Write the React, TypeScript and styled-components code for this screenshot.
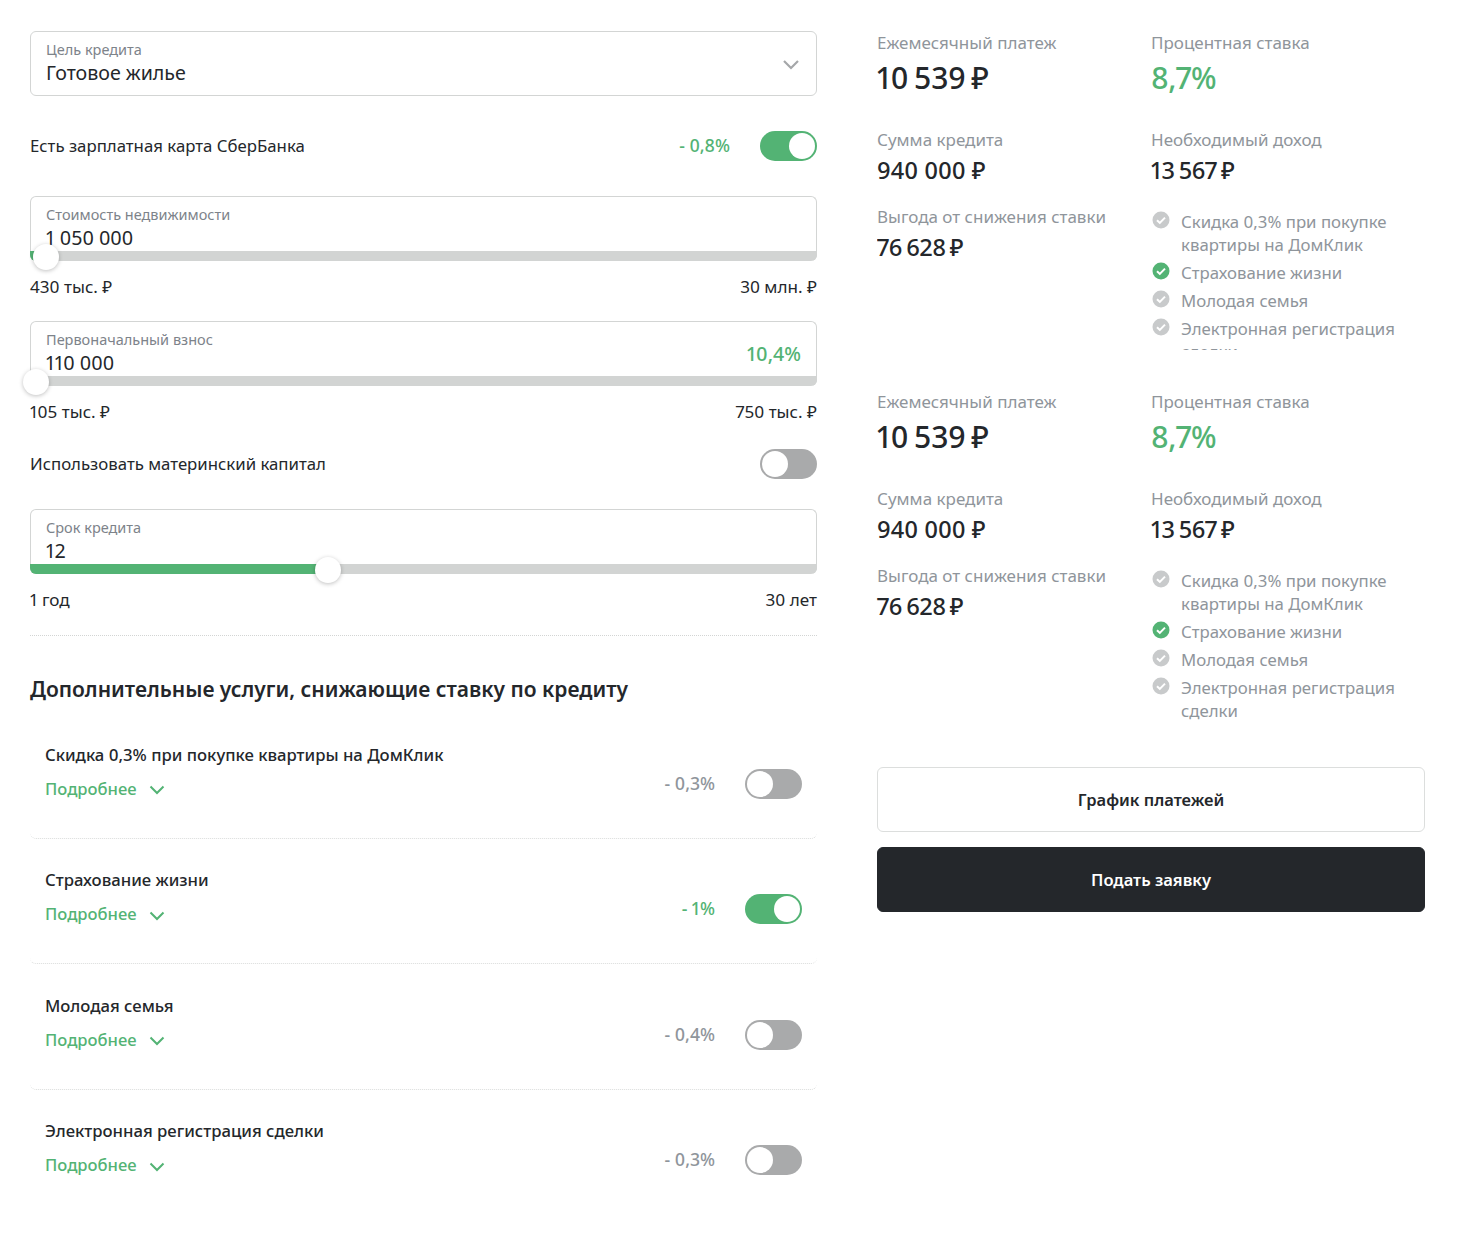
import React from "react";
import styled, { createGlobalStyle } from "styled-components";

const green = "#53b374";
const dark = "#24272b";

const Global = createGlobalStyle`
  html, body { margin: 0; padding: 0; background: #fff; }
  body {
    font-family: "Noto Sans", "Open Sans", "DejaVu Sans", sans-serif;
    font-variant-numeric: proportional-nums;
    color: ${dark};
  }
  * { box-sizing: border-box; }
`;

const Page = styled.div`
  width: 1457px;
  height: 1241px;
  padding: 31px 32px 0 30px;
  display: flex;
  gap: 60px;
  overflow: hidden;
`;
const Left = styled.div`
  width: 787px;
  flex: none;
  display: flex;
  flex-direction: column;
`;
const Right = styled.div`
  width: 548px;
  flex: none;
  display: flex;
  flex-direction: column;
`;
const Field = styled.div<{ $mb?: number }>`
  position: relative;
  height: 65px;
  border: 1px solid #d3d5d4;
  border-radius: 6px;
  padding: 8px 15px 0;
  display: flex;
  justify-content: space-between;
  margin-bottom: ${(p) => p.$mb ?? 0}px;
`;
const SliderField = styled(Field)`
  border-bottom: none;
`;
const FieldText = styled.div`
  display: flex;
  flex-direction: column;
`;
const FieldLabel = styled.div`
  font-size: 14.5px;
  line-height: 18px;
  margin-bottom: 1px;
  color: #7d838a;
`;
const FieldValue = styled.div`
  font-size: 19.6px;
  line-height: 28px;
`;
const Chevron = styled.svg`
  margin: 19px 1px 0 0;
  width: 18px;
  height: 12px;
  fill: none;
  stroke: #a5a7a9;
  stroke-width: 2.2;
`;
const Track = styled.div`
  position: absolute;
  left: -1px;
  right: -1px;
  bottom: 0;
  height: 10px;
  background: #d2d4d3;
  border-radius: 0 0 6px 6px;
  overflow: hidden;
`;
const Fill = styled.div<{ $w: number }>`
  height: 100%;
  width: ${(p) => p.$w}px;
  background: ${green};
`;
const Thumb = styled.div<{ $x: number }>`
  position: absolute;
  left: ${(p) => p.$x - 13}px;
  bottom: -9px;
  width: 26px;
  height: 26px;
  border-radius: 50%;
  background: #fff;
  box-shadow: 0 1px 4px rgba(0, 0, 0, 0.25);
`;
const Percent = styled.div`
  color: ${green};
  font-size: 19.6px;
  font-weight: 500;
  margin: 11px 0 0;
  line-height: 26px;
`;
const Limits = styled.div<{ $mb: number }>`
  display: flex;
  justify-content: space-between;
  font-size: 17.1px;
  line-height: 22px;
  margin-top: 15px;
  margin-bottom: ${(p) => p.$mb}px;
`;
const OptionRow = styled.div<{ $mt: number; $mb: number }>`
  height: 30px;
  display: flex;
  align-items: center;
  justify-content: space-between;
  margin-top: ${(p) => p.$mt}px;
  margin-bottom: ${(p) => p.$mb}px;
`;
const OptionText = styled.span`
  font-size: 16.8px;
  margin-bottom: 2px;
`;
const Side = styled.div`
  display: flex;
  align-items: center;
  gap: 30px;
`;
const Discount = styled.div<{ $on: boolean }>`
  font-size: 17.6px;
  font-weight: 500;
  margin-bottom: 2px;
  color: ${(p) => (p.$on ? green : "#8f959b")};
`;
const Toggle = styled.div<{ $on: boolean }>`
  width: 57px;
  height: 30px;
  border-radius: 15px;
  padding: 2px;
  background: ${(p) => (p.$on ? green : "#a9aaab")};
  display: flex;
  justify-content: ${(p) => (p.$on ? "flex-end" : "flex-start")};
`;
const Knob = styled.div`
  width: 26px;
  height: 26px;
  border-radius: 50%;
  background: #fff;
`;
const Dotted = styled.div`
  border-top: 1px dotted #d3d5d4;
`;
const Heading = styled.h2`
  font-size: 21px;
  font-weight: 600;
  line-height: 30px;
  margin: 38px 0 0;
`;
const Services = styled.div`
  margin-top: 9.8px;
  display: flex;
  flex-direction: column;
`;
const Service = styled.div<{ $last?: boolean }>`
  height: 125.5px;
  padding: 29.5px 15px 0;
  display: flex;
  justify-content: space-between;
  border-radius: 0 0 6px 6px;
  border-bottom: ${(p) => (p.$last ? "none" : "1px dotted #dadcdb")};
`;
const ServiceTitle = styled.div`
  font-size: 16.7px;
  font-weight: 500;
  line-height: 24px;
`;
const More = styled.div`
  margin-top: 10px;
  display: flex;
  align-items: center;
  gap: 12px;
  font-size: 16.6px;
  font-weight: 500;
  color: ${green};
  line-height: 24px;
`;
const MoreChevron = styled.svg`
  width: 16px;
  height: 10px;
  margin-top: 3px;
  fill: none;
  stroke: ${green};
  stroke-width: 2;
`;
const ServiceSide = styled(Side)`
  margin-top: 26px;
  align-self: flex-start;
`;
const Block = styled.div<{ $clip?: boolean }>`
  display: grid;
  grid-template-columns: 274px 274px;
  height: ${(p) => (p.$clip ? "319px" : "auto")};
  overflow: ${(p) => (p.$clip ? "hidden" : "visible")};
  margin-bottom: ${(p) => (p.$clip ? "40px" : "0")};
`;
const Column = styled.div`
  display: flex;
  flex-direction: column;
`;
const StatLabel = styled.div`
  font-size: 17px;
  line-height: 24px;
  color: #8f959b;
`;
const BigValue = styled.div<{ $green?: boolean }>`
  font-size: 30px;
  font-weight: 500;
  line-height: 40px;
  margin: 3px 0 30px;
  word-spacing: -2px;
  letter-spacing: ${(p) => (p.$green ? "-0.5px" : "-0.1px")};
  color: ${(p) => (p.$green ? green : dark)};
`;
const MidValue = styled.div<{ $tight?: boolean }>`
  font-size: 23.5px;
  font-weight: 500;
  line-height: 30px;
  margin: 3px 0 20px;
  word-spacing: ${(p) => (p.$tight ? "-1.5px" : "0")};
  letter-spacing: ${(p) => (p.$tight ? "-0.4px" : "0")};
`;
const Perks = styled.ul`
  list-style: none;
  margin: 5px 0 0;
  padding: 0;
  display: flex;
  flex-direction: column;
  gap: 5px;
`;
const Perk = styled.li`
  display: flex;
  gap: 11px;
  font-size: 16.8px;
  line-height: 23px;
  color: #8f959b;
`;
const PerkIcon = styled.svg`
  width: 18px;
  height: 18px;
  flex: none;
  margin: 1px 0 0 1px;
`;
const Buttons = styled.div`
  margin-top: 45px;
  display: flex;
  flex-direction: column;
  gap: 15px;
`;
const Outline = styled.div`
  height: 65px;
  border: 1px solid #dcdedd;
  border-radius: 6px;
  display: flex;
  align-items: center;
  justify-content: center;
  font-size: 16.5px;
  font-weight: 600;
`;
const Solid = styled(Outline)`
  background: ${dark};
  border-color: ${dark};
  color: #fff;
`;

const Check = ({ on }: { on: boolean }) => (
  <PerkIcon viewBox="0 0 18 18">
    <circle cx="9" cy="9" r="8.5" fill={on ? green : "#c8cacb"} />
    <path d="M5 9.3l2.8 2.6L13 6.6" fill="none" stroke="#fff" strokeWidth="2" />
  </PerkIcon>
);

const Result = ({ clip }: { clip?: boolean }) => (
  <Block $clip={clip}>
    <Column>
      <StatLabel>Ежемесячный платеж</StatLabel>
      <BigValue>10 539 ₽</BigValue>
      <StatLabel>Сумма кредита</StatLabel>
      <MidValue>940 000 ₽</MidValue>
      <StatLabel>Выгода от снижения ставки</StatLabel>
      <MidValue $tight>76 628 ₽</MidValue>
    </Column>
    <Column>
      <StatLabel>Процентная ставка</StatLabel>
      <BigValue $green>8,7%</BigValue>
      <StatLabel>Необходимый доход</StatLabel>
      <MidValue $tight>13 567 ₽</MidValue>
      <Perks>
        <Perk><Check on={false} /><span>Скидка 0,3% при покупке<br />квартиры на ДомКлик</span></Perk>
        <Perk><Check on /><span>Страхование жизни</span></Perk>
        <Perk><Check on={false} /><span>Молодая семья</span></Perk>
        <Perk><Check on={false} /><span>Электронная регистрация<br />сделки</span></Perk>
      </Perks>
    </Column>
  </Block>
);

const services = [
  { title: "Скидка 0,3% при покупке квартиры на ДомКлик", off: "- 0,3%", on: false },
  { title: "Страхование жизни", off: "- 1%", on: true },
  { title: "Молодая семья", off: "- 0,4%", on: false },
  { title: "Электронная регистрация сделки", off: "- 0,3%", on: false },
];

export default function App() {
  return (
    <Page>
      <Global />
      <Left>
        <Field>
          <FieldText>
            <FieldLabel>Цель кредита</FieldLabel>
            <FieldValue>Готовое жилье</FieldValue>
          </FieldText>
          <Chevron viewBox="0 0 18 12"><path d="M2 2l7 7 7-7" /></Chevron>
        </Field>
        <OptionRow $mt={35} $mb={35}>
          <OptionText>Есть зарплатная карта СберБанка</OptionText>
          <Side>
            <Discount $on>- 0,8%</Discount>
            <Toggle $on><Knob /></Toggle>
          </Side>
        </OptionRow>
        <SliderField>
          <FieldText>
            <FieldLabel>Стоимость недвижимости</FieldLabel>
            <FieldValue>1 050 000</FieldValue>
          </FieldText>
          <Track><Fill $w={16} /></Track>
          <Thumb $x={15} />
        </SliderField>
        <Limits $mb={23}><span>430 тыс. ₽</span><span>30 млн. ₽</span></Limits>
        <SliderField>
          <FieldText>
            <FieldLabel>Первоначальный взнос</FieldLabel>
            <FieldValue>110 000</FieldValue>
          </FieldText>
          <Percent>10,4%</Percent>
          <Track />
          <Thumb $x={5} />
        </SliderField>
        <Limits $mb={0}><span>105 тыс. ₽</span><span>750 тыс. ₽</span></Limits>
        <OptionRow $mt={26} $mb={29.5}>
          <OptionText>Использовать материнский капитал</OptionText>
          <Toggle $on={false}><Knob /></Toggle>
        </OptionRow>
        <SliderField>
          <FieldText>
            <FieldLabel>Срок кредита</FieldLabel>
            <FieldValue>12</FieldValue>
          </FieldText>
          <Track><Fill $w={298} /></Track>
          <Thumb $x={297} />
        </SliderField>
        <Limits $mb={24}><span>1 год</span><span>30 лет</span></Limits>
        <Dotted />
        <Heading>Дополнительные услуги, снижающие ставку по кредиту</Heading>
        <Services>
          {services.map((s, i) => (
            <Service key={s.title} $last={i === services.length - 1}>
              <div>
                <ServiceTitle>{s.title}</ServiceTitle>
                <More>
                  <span>Подробнее</span>
                  <MoreChevron viewBox="0 0 16 10"><path d="M1.5 1.5L8 8l6.5-6.5" /></MoreChevron>
                </More>
              </div>
              <ServiceSide>
                <Discount $on={s.on}>{s.off}</Discount>
                <Toggle $on={s.on}><Knob /></Toggle>
              </ServiceSide>
            </Service>
          ))}
        </Services>
      </Left>
      <Right>
        <Result clip />
        <Result />
        <Buttons>
          <Outline>График платежей</Outline>
          <Solid>Подать заявку</Solid>
        </Buttons>
      </Right>
    </Page>
  );
}
